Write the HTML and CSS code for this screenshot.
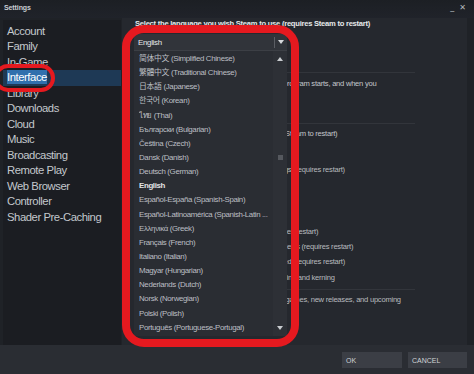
FILE: index.html
```html
<!DOCTYPE html>
<html lang="en">
<head>
<meta charset="utf-8">
<title>Settings</title>
<link rel="stylesheet" href="styles.css">
</head>
<body>
<div class="window">
  <div class="titlebar">
    <span class="title">Settings</span>
    <span class="controls"><span class="min">_</span><span class="close">✕</span></span>
  </div>
  <div class="main">
    <nav class="sidebar">
      <div class="nav-item">Account</div>
      <div class="nav-item">Family</div>
      <div class="nav-item">In-Game</div>
      <div class="nav-item active"><span class="sel">Interface</span></div>
      <div class="nav-item">Library</div>
      <div class="nav-item">Downloads</div>
      <div class="nav-item">Cloud</div>
      <div class="nav-item">Music</div>
      <div class="nav-item">Broadcasting</div>
      <div class="nav-item">Remote Play</div>
      <div class="nav-item">Web Browser</div>
      <div class="nav-item">Controller</div>
      <div class="nav-item">Shader Pre-Caching</div>
    </nav>
    <section class="panel">
      <div class="p-head lang">Select the language you wish Steam to use (requires Steam to restart)</div>
      <div class="dropdown">
        <div class="dd-field">
          <span class="dd-value">English</span>
          <span class="dd-btn"><svg width="6" height="4" viewBox="0 0 6 4"><path d="M0 0H6L3 4Z" fill="#d6d9dc"/></svg></span>
        </div>
        <div class="dd-menu">
          <ul class="dd-list">
            <li class="cjk">简体中文 (Simplified Chinese)</li>
            <li class="cjk">繁體中文 (Traditional Chinese)</li>
            <li class="cjk">日本語 (Japanese)</li>
            <li class="cjk">한국어 (Korean)</li>
            <li>ไทย (Thai)</li>
            <li>Български (Bulgarian)</li>
            <li>Čeština (Czech)</li>
            <li>Dansk (Danish)</li>
            <li>Deutsch (German)</li>
            <li class="current">English</li>
            <li>Español-España (Spanish-Spain)</li>
            <li>Español-Latinoamérica (Spanish-Latin ...</li>
            <li>Ελληνικά (Greek)</li>
            <li>Français (French)</li>
            <li>Italiano (Italian)</li>
            <li>Magyar (Hungarian)</li>
            <li>Nederlands (Dutch)</li>
            <li>Norsk (Norwegian)</li>
            <li>Polski (Polish)</li>
            <li>Português (Portuguese-Portugal)</li>
          </ul>
          <div class="dd-scroll">
            <svg class="arrow" width="6" height="4" viewBox="0 0 6 4"><path d="M0 4H6L3 0Z" fill="#c9ccd0"/></svg>
            <span class="thumb"></span>
            <svg class="arrow" width="6" height="4" viewBox="0 0 6 4"><path d="M0 0H6L3 4Z" fill="#c9ccd0"/></svg>
          </div>
        </div>
      </div>
      <div class="p-row">Favorite window:</div>
      <div class="divider"></div>
      <div class="p-desc">Select which Steam window appears when the program starts, and when you double-click the tray icon</div>
      <div class="divider gap-big"></div>
      <div class="p-head skin">Select the skin you wish Steam to use (requires Steam to restart)</div>
      <div class="p-select">&lt;default skin&gt;</div>
      <div class="checks">
        <div class="check"><span class="box"></span><span>Scale text and icons to match monitor settings (requires restart)</span></div>
        <div class="check"><span class="box"></span><span>Run Steam when my computer starts</span></div>
        <div class="check"><span class="box"></span><span>Start Steam in Big Picture Mode</span></div>
        <div class="check"><span class="box"></span><span>Display web address bars when available</span></div>
        <div class="check"><span class="box"></span><span>Enable smooth scrolling in web views (requires restart)</span></div>
        <div class="check"><span class="box"></span><span>Enable GPU accelerated rendering in web views (requires restart)</span></div>
        <div class="check"><span class="box"></span><span>Enable hardware video decoding, if supported (requires restart)</span></div>
        <div class="check"><span class="box"></span><span>Enable DirectWrite for improved font smoothing and kerning</span></div>
      </div>
      <div class="divider gap-small"></div>
      <div class="check notify"><span class="box"></span><span>Notify me about additions or changes to my games, new releases, and upcoming releases.</span></div>
    </section>
  </div>
  <div class="footer">
    <button class="btn">OK</button>
    <button class="btn">CANCEL</button>
  </div>
  <div class="annot-rect"></div>
  <div class="annot-oval"></div>
</div>
</body>
</html>
```
FILE: styles.css
```css
* { box-sizing: border-box; }
html, body { margin: 0; padding: 0; }
body {
  background: #1e2126;
  font-family: "Liberation Sans", Arial, "Noto Sans CJK SC", sans-serif;
}
.window {
  position: relative;
  width: 474px;
  height: 374px;
  overflow: hidden;
  background: #1f2227;
  display: flex;
  flex-direction: column;
}
.titlebar {
  height: 18px;
  flex: none;
  display: flex;
  align-items: center;
  justify-content: space-between;
  padding: 0 8px 4px 4px;
  background: linear-gradient(#1c1f24, #20232a);
}
.title {
  font-size: 7px;
  font-weight: bold;
  letter-spacing: -0.1px;
  color: #c9ced3;
}
.controls {
  display: flex;
  gap: 5px;
  color: #b3b7bb;
  font-family: "DejaVu Sans", sans-serif;
  font-size: 8px;
}
.main {
  height: 327px;
  flex: none;
  display: flex;
}
.sidebar {
  width: 118px;
  margin: 2px 0 0 3px;
  background: #1b1d22;
  padding-top: 3.75px;
  display: flex;
  flex-direction: column;
}
.nav-item {
  height: 15.5px;
  line-height: 15.5px;
  font-size: 11.3px;
  letter-spacing: -0.45px;
  color: #c3c8cd;
  padding-left: 4px;
  white-space: nowrap;
}
.nav-item.active {
  background: #1e3955;
  color: #ffffff;
}
.sel {
  background: #3170ad;
  padding: 1px 0;
}
.panel {
  width: 345px;
  margin-left: 1px;
  background: #25282e;
  padding-left: 13px;
  font-size: 7.6px;
  letter-spacing: -0.25px;
  color: #b9bcc0;
  display: flex;
  flex-direction: column;
}
.p-head {
  height: 12px;
  line-height: 12px;
  color: #dfe1e3;
  white-space: nowrap;
}
.p-head.lang {
  font-weight: bold;
  color: #e6e8ea;
}
.dropdown {
  position: relative;
  margin: 4px 0 0 -1px;
  width: 153px;
  height: 17px;
  flex: none;
  z-index: 2;
}
.dd-field {
  height: 17px;
  display: flex;
  align-items: center;
  background: #31343a;
  border-bottom: 1px solid #3c3f45;
}
.dd-value {
  flex: 1;
  padding-left: 4px;
  color: #e6e8ea;
  font-size: 7.9px;
  letter-spacing: -0.3px;
}
.dd-btn {
  width: 13px;
  height: 11px;
  border-left: 1px solid #5b5e64;
  display: flex;
  align-items: center;
  justify-content: center;
}
.dd-menu {
  position: absolute;
  top: 17px;
  left: 0;
  width: 153px;
  height: 285px;
  background: #2a2d33;
  display: flex;
}
.dd-list {
  list-style: none;
  margin: 0;
  padding: 1px 0 0 5px;
  flex: 1;
  font-size: 7.9px;
  letter-spacing: -0.35px;
}
.dd-list li {
  height: 14.15px;
  line-height: 14.15px;
  white-space: nowrap;
  overflow: hidden;
  color: #bcbfc3;
}
.dd-list li.current {
  font-weight: bold;
  color: #e2e4e6;
}
.cjk { font-family: "Liberation Sans", "Noto Sans CJK SC", sans-serif; }
.dd-scroll {
  width: 14px;
  background: #2d3036;
  display: flex;
  flex-direction: column;
  align-items: center;
  padding: 6px 0 6px;
}
.arrow { flex: none; }
.thumb {
  width: 5px;
  height: 5px;
  background: #55585e;
  margin: 94px 0 auto;
}
.p-row {
  height: 12px;
  line-height: 12px;
  margin-top: 4px;
}
.divider {
  height: 1px;
  width: 280px;
  background: #32353b;
  margin-top: 5px;
  flex: none;
}
.p-desc {
  margin-top: 5px;
  width: 250px;
  line-height: 12px;
  color: #c4c7cb;
}
.divider.gap-big { margin-top: 21px; }
.p-head.skin { margin-top: 4px; color: #c4c7cb; }
.p-select {
  margin-top: 3px;
  width: 140px;
  height: 15px;
  line-height: 15px;
  padding-left: 4px;
  background: #31343a;
  flex: none;
}
.checks {
  margin-top: 4.35px;
  display: flex;
  flex-direction: column;
}
.check {
  height: 15.3px;
  display: flex;
  align-items: center;
  gap: 4px;
  white-space: nowrap;
  color: #b7babe;
}
.box {
  width: 9px;
  height: 9px;
  flex: none;
  background: #3a3d43;
}
.divider.gap-small { margin-top: 4.25px; }
.check.notify {
  margin-top: 4px;
  height: auto;
  align-items: flex-start;
  white-space: normal;
  line-height: 12px;
  width: 275px;
}
.check.notify .box { margin-top: 1.5px; }
.footer {
  flex: 1;
  display: flex;
  justify-content: flex-end;
  align-items: flex-start;
  gap: 6px;
  padding: 7px 7px 0 0;
  background: #2a2d33;
}
.btn {
  height: 16px;
  border: none;
  background: #3b3e45;
  color: #d0d3d6;
  font-family: "Liberation Sans", Arial, sans-serif;
  font-size: 7px;
  text-align: left;
  padding: 0 0 0 4px;
  width: 60px;
}
.btn + .btn { width: 59px; }
.annot-rect {
  position: absolute;
  left: 122px;
  top: 25px;
  width: 177px;
  height: 322px;
  border: 8px solid #e5191f;
  border-radius: 22px;
  z-index: 5;
}
.annot-oval {
  position: absolute;
  left: -6px;
  top: 64px;
  width: 61px;
  height: 28px;
  border: 4.5px solid #e5191f;
  border-radius: 14px;
  z-index: 5;
}
```
